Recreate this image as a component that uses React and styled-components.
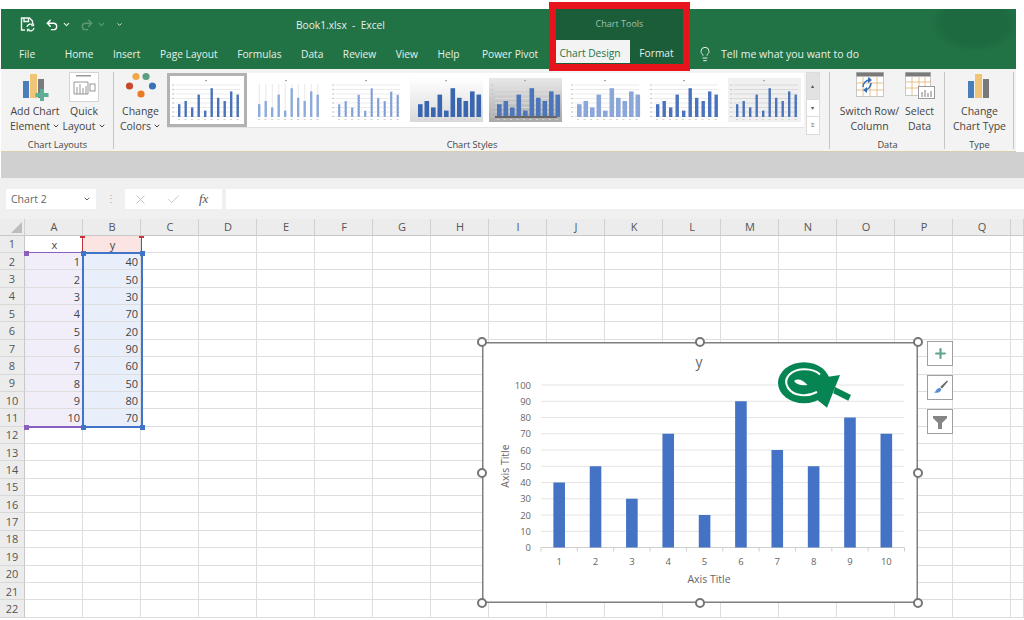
import React from "react";
import styled, { createGlobalStyle } from "styled-components";
import { Undo2, Redo2, ChevronDown, Lightbulb, Plus, X, Check } from "lucide-react";

const DATA = [40, 50, 30, 70, 20, 90, 60, 50, 80, 70];
const TABS = ["Home", "Insert", "Page Layout", "Formulas", "Data", "Review", "View", "Help", "Power Pivot"];
const COLS = "ABCDEFGHIJKLMNOPQ".split("");
const ROWS = Array.from({ length: 22 }, (_, i) => i + 1);
const THUMBS = ["plain", "drop", "dashed", "heavy", "grey", "soft", "dark", "mesh"];

const GlobalStyle = createGlobalStyle`
  html, body { margin: 0; padding: 0; background: #fff; overflow: hidden; }
  body { font-family: "Open Sans", "Liberation Sans", sans-serif; }
`;

const Page = styled.div`
  position: relative;
  width: 1024px;
  height: 620px;
  padding-top: 9px;
  box-sizing: border-box;
  overflow: hidden;
  background: #fff;
`;

const Header = styled.header`
  display: flex;
  height: 60px;
  width: 1015px;
  margin-left: 1px;
  background: #217346;
  color: #e6f0ea;
  font-size: 10.2px;
`;

const HeaderMain = styled.div`
  width: 555px;
  display: flex;
  flex-direction: column;
`;

const TitleBar = styled.div`
  height: 31px;
  display: flex;
  align-items: center;
  padding-left: 18px;
  box-sizing: border-box;
`;

const Title = styled.span`
  margin-left: 173px;
  white-space: pre;
  font-size: 10.2px;
`;

const QatGap = styled.span`
  display: inline-flex;
  margin-left: ${({ $m }) => $m}px;
  opacity: ${({ $dim }) => ($dim ? 0.3 : 1)};
`;

const TabRow = styled.nav`
  display: flex;
  align-items: center;
  height: 29px;
  padding-left: 18px;
  padding-bottom: 2px;
  box-sizing: border-box;
  gap: 19.5px;
`;

const Tab = styled.span`
  white-space: nowrap;
  margin-right: ${({ $file }) => ($file ? "10px" : 0)};
  margin-left: ${({ $last }) => ($last ? "3px" : 0)};
`;

const ContextGroup = styled.div`
  width: 127px;
  background: #1b5c39;
  display: flex;
  flex-direction: column;
`;

const ContextTitle = styled.div`
  height: 31px;
  padding-bottom: 3px;
  box-sizing: border-box;
  display: flex;
  align-items: center;
  justify-content: center;
  font-size: 9px;
  color: #9fc4ae;
`;

const ContextTabs = styled.div`
  display: flex;
  height: 23px;
  align-items: stretch;
`;

const ContextTab = styled.span`
  display: flex;
  align-items: center;
  justify-content: center;
  width: ${({ $w }) => $w}px;
  padding: 3px ${({ $active }) => ($active ? 6 : 0)}px 0 0;
  box-sizing: border-box;
  background: ${({ $active }) => ($active ? "#f3f3f3" : "transparent")};
  color: ${({ $active }) => ($active ? "#217346" : "#e6f0ea")};
`;

const HeaderRight = styled.div`
  flex: 1;
  display: flex;
  flex-direction: column;
  justify-content: flex-end;
  background: radial-gradient(ellipse 46px 30px at 292px 14px, #1d6a40 70%, transparent 100%);
`;

const TellMe = styled.div`
  height: 29px;
  padding: 0 0 2px 14px;
  box-sizing: border-box;
  display: flex;
  align-items: center;
  gap: 8px;
  font-size: 10.5px;
`;

const Highlight = styled.div`
  position: absolute;
  left: 549px;
  top: 2px;
  width: 141px;
  height: 69px;
  border: 7px solid #e8141c;
  box-sizing: border-box;
`;

const Ribbon = styled.section`
  display: flex;
  width: 1015px;
  height: 83px;
  margin-left: 1px;
  background: #f3f3f3;
  border-bottom: 1px solid #d9cfae;
  box-sizing: border-box;
  color: #444;
  font-size: 10.5px;
`;

const Group = styled.div`
  width: ${({ $w }) => $w}px;
  flex: none;
  display: flex;
  flex-direction: column;
  position: relative;
  padding-top: 3px;
  box-sizing: border-box;
  &::after {
    content: "";
    position: absolute;
    right: 0;
    top: 3px;
    bottom: 2px;
    width: 1px;
    background: #c6c6c6;
  }
`;

const GroupBody = styled.div`
  flex: 1;
  display: flex;
  justify-content: ${({ $center }) => ($center ? "center" : "flex-start")};
  padding-left: ${({ $pl }) => $pl || 0}px;
`;

const GroupLabel = styled.div`
  height: 16px;
  text-align: center;
  font-size: 9.2px;
  line-height: 19px;
  color: #444;
`;

const RibbonButton = styled.div`
  width: ${({ $w }) => $w}px;
  display: flex;
  flex-direction: column;
  align-items: center;
  text-align: center;
  line-height: 14.5px;
  white-space: nowrap;
`;

const IconSlot = styled.div`
  height: 31px;
  display: flex;
  align-items: flex-start;
  justify-content: center;
  margin-bottom: 1px;
`;

const Caret = styled(ChevronDown)`
  width: 8px;
  height: 8px;
  margin-left: 2px;
  stroke-width: 3;
`;

const Gallery = styled.div`
  display: flex;
  height: 54px;
  margin-top: 1px;
  background: #fff;
  border-bottom: 1px solid #e2e2e2;
`;

const ThumbSlot = styled.div`
  width: 79.6px;
  flex: none;
  display: flex;
  align-items: center;
  justify-content: center;
  box-sizing: border-box;
  border: ${({ $selected }) => ($selected ? "3px solid #b2b2b2" : "none")};
  padding-left: ${({ $selected }) => ($selected ? 0 : 1)}px;
`;

const ThumbArt = styled.svg`
  display: block;
  filter: blur(0.35px);
`;

const GalleryScroll = styled.div`
  width: 14px;
  margin-left: 2px;
  display: flex;
  flex-direction: column;
  border: 1px solid #dcdcdc;
  box-sizing: border-box;
`;

const ScrollButton = styled.div`
  flex: ${({ $flex }) => $flex};
  display: flex;
  align-items: center;
  justify-content: center;
  background: ${({ $off }) => ($off ? "#e2e2e2" : "#fff")};
  border-bottom: 1px solid #dcdcdc;
  color: #555;
  font-size: 6px;
  line-height: 1;
  &:last-child { border-bottom: none; }
`;

const GreyBand = styled.div`
  height: 26px;
  margin-left: 1px;
  background: #d0d0d0;
`;

const FormulaArea = styled.div`
  height: 41px;
  background: #f0f0f0;
  display: flex;
  padding: 11px 0 0 6px;
  box-sizing: border-box;
  align-items: flex-start;
  color: #666;
`;

const NameBox = styled.div`
  width: 90px;
  height: 20px;
  background: #fff;
  display: flex;
  align-items: center;
  justify-content: space-between;
  padding: 0 5px;
  box-sizing: border-box;
  font-size: 10.5px;
`;

const Dots = styled.div`
  width: 29px;
  text-align: center;
  color: #aaa;
  font-size: 10px;
  line-height: 19px;
`;

const FxBox = styled.div`
  width: 97px;
  height: 20px;
  background: #fff;
  display: flex;
  align-items: center;
  gap: 18px;
  padding-left: 8px;
  box-sizing: border-box;
  color: #c4c4c4;
`;

const FxLabel = styled.span`
  font-family: "Liberation Serif", serif;
  font-style: italic;
  font-size: 13px;
  color: #555;
`;

const FormulaInput = styled.div`
  flex: 1;
  height: 20px;
  margin-left: 4px;
  background: #fff;
`;

const Sheet = styled.div`
  position: relative;
  display: grid;
  grid-template-columns: 25px repeat(17, 58px) 1fr;
  grid-template-rows: 16.7px repeat(22, 17.37px);
  font-size: 11px;
  color: #444;
`;

const CornerCell = styled.div`
  background: #ececec;
  border-right: 1px solid #d0d0d0;
  border-bottom: 1px solid #c8c8c8;
  box-sizing: border-box;
  position: relative;
  &::after {
    content: "";
    position: absolute;
    right: 2px;
    bottom: 2px;
    border-style: solid;
    border-width: 0 0 11px 11px;
    border-color: transparent transparent #bdbdbd transparent;
  }
`;

const ColHead = styled.div`
  background: #ececec;
  border-right: 1px solid #d0d0d0;
  border-bottom: 1px solid #c8c8c8;
  box-sizing: border-box;
  display: flex;
  align-items: center;
  justify-content: center;
  padding-left: 1px;
  font-size: 11px;
  color: #555;
`;

const RowHead = styled.div`
  background: #ececec;
  border-right: 1px solid #c8c8c8;
  border-bottom: 1px solid #d8d8d8;
  box-sizing: border-box;
  display: flex;
  align-items: center;
  justify-content: center;
  font-size: 11px;
  color: #555;
`;

const Cell = styled.div`
  background: ${({ $bg }) => $bg || "#fff"};
  border-right: 1px solid #dedede;
  border-bottom: 1px solid #dedede;
  box-sizing: border-box;
  display: flex;
  align-items: center;
  justify-content: ${({ $head }) => ($head ? "center" : "flex-end")};
  padding-right: ${({ $head }) => ($head ? 0 : 2)}px;
  padding-left: ${({ $head }) => ($head ? 2 : 0)}px;
  padding-top: 1px;
  font-size: 11px;
  line-height: 1;
`;

// range colours Excel draws around the chart's source data
const RangeLine = styled.div`
  position: absolute;
  left: ${({ $l }) => $l}px;
  top: ${({ $t }) => $t}px;
  width: ${({ $w }) => $w}px;
  height: ${({ $h }) => $h}px;
  background: ${({ $c }) => $c};
`;

const RangeKnob = styled.div`
  position: absolute;
  left: ${({ $l }) => $l - 2}px;
  top: ${({ $t }) => $t - 2}px;
  width: 4.5px;
  height: 4.5px;
  background: ${({ $c }) => $c};
`;

const ChartFrame = styled.div`
  position: absolute;
  left: 482px;
  top: 123px;
  width: 436px;
  height: 261px;
  padding: 2px;
  background: #fff;
  box-shadow: inset 0 0 0 1.5px #7f7f7f;
  box-sizing: border-box;
`;

const Handle = styled.div`
  position: absolute;
  left: ${({ $x }) => $x}%;
  top: ${({ $y }) => $y}%;
  width: 10px;
  height: 10px;
  margin: -5px 0 0 -5px;
  border: 2px solid #757575;
  border-radius: 50%;
  background: #fff;
  box-sizing: border-box;
`;

const ChartTools = styled.div`
  position: absolute;
  left: 927px;
  top: 122px;
  display: flex;
  flex-direction: column;
  gap: 9px;
`;

const ChartToolButton = styled.div`
  width: 26px;
  height: 25px;
  background: #fff;
  border: 1.5px solid #a0a0a0;
  box-sizing: border-box;
  display: flex;
  align-items: center;
  justify-content: center;
`;

const CursorMark = styled.svg`
  position: absolute;
  left: 295px;
  top: 18px;
`;

function Thumb({ kind }) {
  const w = 73;
  const h = 44;
  const dense = ["heavy", "grey", "soft"].includes(kind);
  const barW = dense ? 4.6 : kind === "dark" ? 3.4 : 2.4;
  const fill = {
    plain: "#4a72b8", drop: "#8caadb", dashed: "#7f9dd6", heavy: "#3a66b0",
    grey: "#4d76ba", soft: "#8ba6d8", dark: "#4a72bd", mesh: "#4a72b8",
  }[kind];
  const bg = kind === "grey" ? "url(#thumbGrey)" : kind === "heavy" ? "url(#thumbFade)" : kind === "mesh" ? "#f0f0f0" : "#fff";
  return (
    <ThumbArt width={w} height={h} viewBox={`0 0 ${w} ${h}`}>
      <defs>
        <linearGradient id="thumbGrey" x1="0" y1="0" x2="0" y2="1">
          <stop offset="0" stopColor="#e8e8e8" />
          <stop offset="1" stopColor="#a9a9a9" />
        </linearGradient>
        <linearGradient id="thumbFade" x1="0" y1="0" x2="0" y2="1">
          <stop offset="0" stopColor="#fff" />
          <stop offset="1" stopColor="#d9d9d9" />
        </linearGradient>
      </defs>
      <rect width={w} height={h} fill={bg} />
      <rect x="35" y="2" width="2" height="1.2" fill="#aaa" />
      {kind !== "drop" && kind !== "heavy" &&
        [0, 1, 2, 3, 4, 5, 6, 7].map(i => (
          <g key={i}>
            <line x1="6" x2={w - 3} y1={7 + i * 4.5} y2={7 + i * 4.5} stroke={kind === "mesh" ? "#cfcfcf" : "#e3e3e3"} strokeWidth="0.7" />
            <rect x="2" y={6.5 + i * 4.5} width="2.5" height="1" fill="#c8c8c8" />
          </g>
        ))}
      {DATA.map((v, i) => {
        const x = 8 + i * 6.5;
        const bh = v * 0.32;
        return (
          <g key={i}>
            {kind === "drop" && <line x1={x + 1.3} x2={x + 1.3} y1="6" y2="39" stroke="#e2e2e2" strokeWidth="0.8" />}
            <rect x={x} y={39 - bh} width={barW} height={bh} fill={fill} strokeDasharray={kind === "dashed" ? "2 1" : undefined} stroke={kind === "dashed" ? "#fff" : "none"} strokeWidth={kind === "dashed" ? 0.4 : 0} />
            <rect x={x} y="41" width="2" height="1" fill="#d0d0d0" />
          </g>
        );
      })}
      {kind === "grey" && <rect x="6" y="38" width="62" height="2" fill="#666" />}
    </ThumbArt>
  );
}

function SaveIcon() {
  return (
    <svg width="17" height="17" viewBox="0 0 17 17" fill="none" stroke="#f2f6f3" strokeWidth="1.4">
      <path d="M6 14H2.5V2h8l3 3v3" />
      <path d="M5 2v3.5h4.5V2" />
      <path d="M8 11a3.4 3.4 0 0 1 6-1.6M15 12a3.4 3.4 0 0 1-6 1.6" />
      <path d="M14.6 7.4v2.4h-2.4M8.4 15.6v-2.4h2.4" strokeWidth="1.1" />
    </svg>
  );
}

function BarsIcon({ plus }) {
  return (
    <svg width="30" height="30" viewBox="0 0 30 30">
      <rect x="3" y="9" width="6" height="17" fill="#4a7ebb" />
      <rect x="10" y="2" width="7" height="24" fill="#f0c577" />
      <rect x="18" y="7" width="6" height="19" fill="#7a7a7a" />
      {plus && <path d="M20 17h4v4h4.5v4H24v4h-4v-4h-4.5v-4H20z" fill="#5faf95" />}
    </svg>
  );
}

function QuickLayoutIcon() {
  return (
    <svg width="30" height="30" viewBox="0 0 30 30" fill="none">
      <rect x="0.5" y="0.5" width="29" height="29" fill="#fff" stroke="#d4d4d4" />
      <rect x="7" y="3" width="15" height="1.5" fill="#999" />
      <path d="M5 22V10h14v12zM8 22v-7M11 22v-10M14 22v-6M17 22v-8" stroke="#8a8a8a" strokeWidth="0.9" />
      <rect x="21" y="12" width="5" height="7" stroke="#8a8a8a" strokeWidth="0.9" />
    </svg>
  );
}

function ColorsIcon() {
  return (
    <svg width="30" height="30" viewBox="0 0 30 30">
      <circle cx="10" cy="4.5" r="3.6" fill="#f0a94a" />
      <circle cx="20" cy="4.5" r="3.6" fill="#5c9e80" />
      <circle cx="3.5" cy="14" r="3.6" fill="#c9492f" />
      <circle cx="26.5" cy="14" r="3.6" fill="#3a73b5" />
      <circle cx="15" cy="22" r="3.6" fill="#ec7a24" />
    </svg>
  );
}

function SwitchIcon() {
  return (
    <svg width="28" height="26" viewBox="0 0 28 26" fill="none">
      <rect x="0.5" y="0.5" width="27" height="24" fill="#fff" stroke="#c8c8c8" />
      <rect x="0.5" y="0.5" width="27" height="4" fill="#7a7a7a" />
      <path d="M0 11h28M0 18h28M7 5v20M14 5v20M21 5v20" stroke="#e2b27a" strokeWidth="0.8" />
      <path d="M7 15a7 7 0 0 1 7-7M15 11a7 7 0 0 1-6 7" stroke="#2f6fb6" strokeWidth="1.5" />
      <path d="M12 5l4 3-4 3zM11 15l-4 3 4 3z" fill="#2f6fb6" />
    </svg>
  );
}

function SelectDataIcon() {
  return (
    <svg width="30" height="28" viewBox="0 0 30 28" fill="none">
      <rect x="0.5" y="0.5" width="25" height="23" fill="#fff" stroke="#c8c8c8" />
      <rect x="0.5" y="0.5" width="25" height="4" fill="#7a7a7a" />
      <path d="M0 10h26M0 16h26M7 5v19M14 5v19M20 5v19" stroke="#e2b27a" strokeWidth="0.8" />
      <rect x="13.5" y="14.5" width="16" height="12" fill="#fff" stroke="#9a9a9a" />
      <path d="M17 25v-5M20 25v-7M23 25v-4M26 25v-6" stroke="#888" strokeWidth="1.1" />
    </svg>
  );
}

function BrushIcon() {
  return (
    <svg width="17" height="17" viewBox="0 0 17 17">
      <path d="M15 1.5l1 1-6 7-1.8-1.4z" fill="#6a6a6a" />
      <path d="M7.6 8.7l1.8 1.5c-.5 2.8-3.4 4-7.4 3.5 2-.9 1.8-4 5.6-5z" fill="#5b8fce" />
    </svg>
  );
}

function FunnelIcon() {
  return (
    <svg width="16" height="16" viewBox="0 0 16 16">
      <path d="M1 2h14v2l-5 5v6H6V9L1 4z" fill="#858585" />
    </svg>
  );
}

function CursorIcon() {
  return (
    <CursorMark width="76" height="50" viewBox="0 0 76 50">
      <ellipse cx="27" cy="22.8" rx="26" ry="20.5" fill="#068452" />
      <path d="M43 18L63 15 50 47.7 38 38z" fill="#068452" />
      <path d="M58 27L74 35 71.3 40.7 56.3 33.3z" fill="#068452" />
      <path d="M43 14.5C36 8 20 7 12 15 5 23 12 34 24 35c6 1 12-1 16-3" fill="none" stroke="#fff" strokeWidth="2" />
      <path d="M17 21c4-3 9-1 13.5 4-5 1-11 0-13.5-4z" fill="#fff" />
    </CursorMark>
  );
}

function Chart() {
  const left = 57;
  const zero = 203.5;
  const step = 1.625;
  const slot = 36.35;
  const textStyle = { fontFamily: "Open Sans, sans-serif", fill: "#666" };
  return (
    <svg width="432" height="257" viewBox="0 0 432 257" style={{ display: "block" }}>
      <text x="215" y="23" fontSize="14" textAnchor="middle" style={textStyle}>y</text>
      {[100, 90, 80, 70, 60, 50, 40, 30, 20, 10, 0].map(v => {
        const y = zero - v * step;
        return (
          <g key={v}>
            <line x1={left} x2={left + slot * 10} y1={y} y2={y} stroke={v === 0 ? "#cfcfcf" : "#e4e4e4"} />
            <text x={left - 10} y={y + 3.5} fontSize="9.5" textAnchor="end" style={textStyle}>{v}</text>
          </g>
        );
      })}
      {DATA.map((v, i) => {
        const cx = left + slot * (i + 0.5);
        return (
          <g key={i}>
            <rect x={cx - 5.8} y={zero - v * step} width="11.6" height={v * step} fill="#4472c4" />
            <line x1={left + slot * i} x2={left + slot * i} y1={zero} y2={zero + 4} stroke="#cfcfcf" />
            <text x={cx} y={zero + 17} fontSize="9.5" textAnchor="middle" style={textStyle}>{i + 1}</text>
          </g>
        );
      })}
      <line x1={left + slot * 10} x2={left + slot * 10} y1={zero} y2={zero + 4} stroke="#cfcfcf" />
      <text x="225" y="239" fontSize="10.5" textAnchor="middle" style={textStyle}>Axis Title</text>
      <text transform="translate(25 122) rotate(-90)" fontSize="10.5" textAnchor="middle" style={textStyle}>Axis Title</text>
    </svg>
  );
}

function App() {
  return (
    <Page>
      <GlobalStyle />
      <Header>
        <HeaderMain>
          <TitleBar>
            <SaveIcon />
            <QatGap $m={9}><Undo2 size={14} strokeWidth={2.4} color="#fff" /></QatGap>
            <QatGap $m={3}><ChevronDown size={9} strokeWidth={3} /></QatGap>
            <QatGap $m={9} $dim><Redo2 size={14} strokeWidth={2.4} /></QatGap>
            <QatGap $m={3} $dim><ChevronDown size={9} strokeWidth={3} /></QatGap>
            <QatGap $m={10}><ChevronDown size={7} strokeWidth={3} /></QatGap>
            <Title>Book1.xlsx  -  Excel</Title>
          </TitleBar>
          <TabRow>
            <Tab $file>File</Tab>
            {TABS.map(t => <Tab key={t} $last={t === "Power Pivot"}>{t}</Tab>)}
          </TabRow>
        </HeaderMain>
        <ContextGroup>
          <ContextTitle>Chart Tools</ContextTitle>
          <ContextTabs>
            <ContextTab $w={74} $active>Chart Design</ContextTab>
            <ContextTab $w={53}>Format</ContextTab>
          </ContextTabs>
        </ContextGroup>
        <HeaderRight>
          <TellMe>
            <Lightbulb size={16} strokeWidth={1.5} />
            Tell me what you want to do
          </TellMe>
        </HeaderRight>
      </Header>
      <Highlight />

      <Ribbon>
        <Group $w={113}>
          <GroupBody>
            <RibbonButton $w={68}>
              <IconSlot><BarsIcon plus /></IconSlot>
              <span>Add Chart</span>
              <span>Element<Caret /></span>
            </RibbonButton>
            <RibbonButton $w={30}>
              <IconSlot><QuickLayoutIcon /></IconSlot>
              <span>Quick</span>
              <span>Layout<Caret /></span>
            </RibbonButton>
          </GroupBody>
          <GroupLabel>Chart Layouts</GroupLabel>
        </Group>
        <Group $w={716}>
          <GroupBody>
            <RibbonButton $w={53}>
              <IconSlot><ColorsIcon /></IconSlot>
              <span>Change</span>
              <span>Colors<Caret /></span>
            </RibbonButton>
            <Gallery>
              {THUMBS.map((k, i) => (
                <ThumbSlot key={k} $selected={i === 0}><Thumb kind={k} /></ThumbSlot>
              ))}
            </Gallery>
            <GalleryScroll>
              <ScrollButton $flex={24} $off>▴</ScrollButton>
              <ScrollButton $flex={14}>▾</ScrollButton>
              <ScrollButton $flex={16}>≡</ScrollButton>
            </GalleryScroll>
          </GroupBody>
          <GroupLabel>Chart Styles</GroupLabel>
        </Group>
        <Group $w={115}>
          <GroupBody $pl={5}>
            <RibbonButton $w={69}>
              <IconSlot><SwitchIcon /></IconSlot>
              <span>Switch Row/</span>
              <span>Column</span>
            </RibbonButton>
            <RibbonButton $w={31}>
              <IconSlot><SelectDataIcon /></IconSlot>
              <span>Select</span>
              <span>Data</span>
            </RibbonButton>
          </GroupBody>
          <GroupLabel>Data</GroupLabel>
        </Group>
        <Group $w={69}>
          <GroupBody $center>
            <RibbonButton $w={60}>
              <IconSlot><BarsIcon /></IconSlot>
              <span>Change</span>
              <span>Chart Type</span>
            </RibbonButton>
          </GroupBody>
          <GroupLabel>Type</GroupLabel>
        </Group>
      </Ribbon>

      <GreyBand />

      <FormulaArea>
        <NameBox>Chart 2<ChevronDown size={8} strokeWidth={3} /></NameBox>
        <Dots>⋮</Dots>
        <FxBox>
          <X size={15} strokeWidth={1.5} />
          <Check size={15} strokeWidth={1.5} />
          <FxLabel>fx</FxLabel>
        </FxBox>
        <FormulaInput />
      </FormulaArea>

      <Sheet>
        <CornerCell />
        {COLS.map(c => <ColHead key={c}>{c}</ColHead>)}
        <ColHead />
        {ROWS.map(r => (
          <React.Fragment key={r}>
            <RowHead>{r}</RowHead>
            {COLS.map(c => {
              const inRange = r >= 2 && r <= 11;
              let value = "";
              let bg;
              if (c === "A") {
                value = r === 1 ? "x" : inRange ? r - 1 : "";
                bg = inRange ? "#f1eef9" : undefined;
              } else if (c === "B") {
                value = r === 1 ? "y" : inRange ? DATA[r - 2] : "";
                bg = r === 1 ? "#fbe4e2" : inRange ? "#e9effa" : undefined;
              }
              return <Cell key={c} $bg={bg} $head={r === 1}>{value}</Cell>;
            })}
            <Cell />
          </React.Fragment>
        ))}

        <RangeLine $l={25} $t={33} $w={58} $h={1} $c="#8b5fbf" />
        <RangeLine $l={25} $t={207} $w={58} $h={2} $c="#8b5fbf" />
        <RangeLine $l={82} $t={17} $w={1} $h={16} $c="#c8323c" />
        <RangeLine $l={141} $t={17} $w={1} $h={16} $c="#c8323c" />
        <RangeLine $l={80} $t={17} $w={5} $h={2} $c="#c8323c" />
        <RangeLine $l={139} $t={17} $w={5} $h={2} $c="#c8323c" />
        <RangeLine $l={82} $t={33} $w={60} $h={2} $c="#3f74c8" />
        <RangeLine $l={82} $t={207} $w={60} $h={2} $c="#3f74c8" />
        <RangeLine $l={82} $t={33} $w={2} $h={176} $c="#3f74c8" />
        <RangeLine $l={141} $t={33} $w={2} $h={176} $c="#3f74c8" />
        <RangeKnob $l={83} $t={34} $c="#3f74c8" />
        <RangeKnob $l={142} $t={34} $c="#3f74c8" />
        <RangeKnob $l={83} $t={208} $c="#3f74c8" />
        <RangeKnob $l={142} $t={208} $c="#3f74c8" />
        <RangeKnob $l={26} $t={34} $c="#8b5fbf" />
        <RangeKnob $l={26} $t={208} $c="#8b5fbf" />

        <ChartFrame>
          <Chart />
          <CursorIcon />
          {[[0, 0], [50, 0], [100, 0], [0, 50], [100, 50], [0, 100], [50, 100], [100, 100]].map(([x, y]) => (
            <Handle key={`${x}-${y}`} $x={x} $y={y} />
          ))}
        </ChartFrame>
        <ChartTools>
          <ChartToolButton><Plus size={15} strokeWidth={3.5} color="#5fa68c" /></ChartToolButton>
          <ChartToolButton><BrushIcon /></ChartToolButton>
          <ChartToolButton><FunnelIcon /></ChartToolButton>
        </ChartTools>
      </Sheet>
    </Page>
  );
}

export default App;
